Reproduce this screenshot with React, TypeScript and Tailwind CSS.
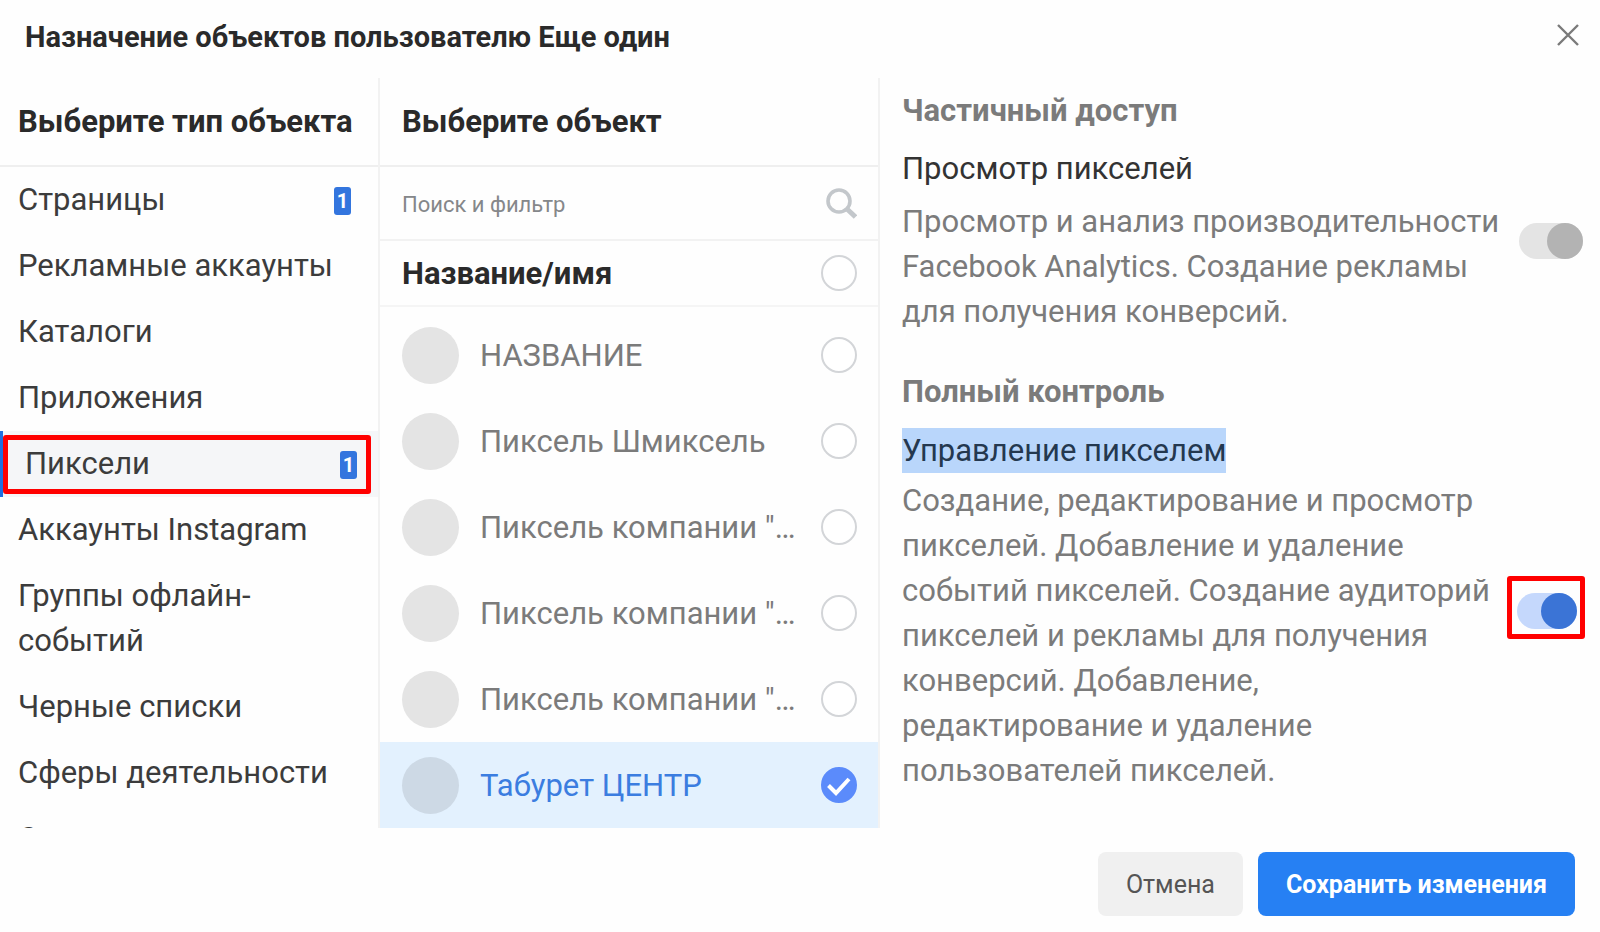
import React, { useState } from "react";

type ObjectType = { name: string; count?: number };

const objectTypes: ObjectType[] = [
  { name: "Страницы", count: 1 },
  { name: "Рекламные аккаунты" },
  { name: "Каталоги" },
  { name: "Приложения" },
  { name: "Пиксели", count: 1 },
  { name: "Аккаунты Instagram" },
  { name: "Группы офлайн-событий" },
  { name: "Черные списки" },
  { name: "Сферы деятельности" },
  { name: "Счета" },
];

const objects = [
  "НАЗВАНИЕ",
  "Пиксель Шмиксель",
  'Пиксель компании "Табурет"',
  'Пиксель компании "Табурет 2"',
  'Пиксель компании "Табурет 3"',
  "Табурет ЦЕНТР",
];

function RoundCheck({
  label,
  checked,
  onChange,
}: {
  label: string;
  checked: boolean;
  onChange: () => void;
}) {
  return (
    <span className="relative flex size-9 shrink-0">
      <input
        type="checkbox"
        aria-label={label}
        checked={checked}
        onChange={onChange}
        className="size-9 appearance-none rounded-full border-2 border-[#d3d5d8] bg-white checked:border-[#5b8bfb] checked:bg-[#5b8bfb]"
      />
      {checked && (
        <svg viewBox="0 0 36 36" className="pointer-events-none absolute inset-0 size-9">
          <path d="M7.5 18.5 L15 26 L28 12" fill="none" stroke="#fff" strokeWidth="4" />
        </svg>
      )}
    </span>
  );
}

function Switch({
  label,
  on,
  muted,
  onChange,
}: {
  label: string;
  on: boolean;
  muted?: boolean;
  onChange?: () => void;
}) {
  return (
    <label className="flex shrink-0">
      <input
        type="checkbox"
        role="switch"
        aria-label={label}
        checked={on}
        disabled={muted}
        onChange={onChange}
        className="peer sr-only"
      />
      <span
        className={
          muted
            ? "flex h-9 w-16 justify-end rounded-full bg-[#e4e4e4]"
            : on
              ? "flex h-9 w-[60px] justify-end rounded-full bg-[#c5d8fc]"
              : "flex h-9 w-[60px] justify-start rounded-full bg-[#e4e4e4]"
        }
      >
        <span className={muted ? "size-9 rounded-full bg-[#b3b3b3]" : "size-9 rounded-full bg-[#3b74d6]"} />
      </span>
    </label>
  );
}

export default function App() {
  const [type, setType] = useState("Пиксели");
  const [picked, setPicked] = useState<string[]>(["Табурет ЦЕНТР"]);
  const [control, setControl] = useState(true);

  const toggle = (name: string) =>
    setPicked((list) => (list.includes(name) ? list.filter((n) => n !== name) : [...list, name]));

  return (
    <div className="flex min-h-screen flex-col bg-[#fefefe] font-[Roboto,sans-serif] text-[31px] leading-[45px] text-[#3c3c3c]">
      <header className="flex h-[78px] items-center justify-between pr-5 pb-2 pl-[25px]">
        <h1 className="pt-1 text-[29px] font-bold text-[#2a2a2a]">
          Назначение объектов пользователю Еще один
        </h1>
        <button type="button" aria-label="Закрыть" className="flex">
          <svg viewBox="0 0 24 24" className="size-6">
            <path d="M2 2 L22 22 M22 2 L2 22" stroke="#7a7a7a" strokeWidth="2.4" />
          </svg>
        </button>
      </header>

      <main className="grid h-[750px] grid-cols-[minmax(0,19fr)_minmax(0,25fr)_minmax(0,36fr)]">
        <nav className="flex flex-col overflow-hidden border-r-2 border-[#f2f2f2]">
          <h2 className="flex h-[89px] shrink-0 items-center border-b-2 border-[#efefef] pl-[18px] font-bold whitespace-nowrap text-[#2a2a2a]">
            Выберите тип объекта
          </h2>
          {objectTypes.map((item) => {
            const active = item.name === type;
            return (
              <button
                key={item.name}
                type="button"
                onClick={() => setType(item.name)}
                className={
                  active
                    ? "relative flex min-h-[66px] shrink-0 items-center justify-between border-l-[3px] border-[#1f6fe0] bg-[#f5f6f8] pt-[10px] pr-[21px] pb-[11px] pl-[22px] text-left"
                    : "flex min-h-[66px] shrink-0 items-center justify-between pt-[10px] pr-[27px] pb-[11px] pl-[18px] text-left"
                }
              >
                <span>{item.name}</span>
                {item.count && (
                  <span className="mt-[2px] flex h-7 w-[17px] items-center justify-center rounded-[3px] bg-[#3375de] text-[20px] leading-7 font-bold text-white">
                    {item.count}
                  </span>
                )}
                {active && (
                  <span className="pointer-events-none absolute top-1 right-[7px] bottom-[3px] left-0 rounded-[3px] border-5 border-[#ff0000]" />
                )}
              </button>
            );
          })}
        </nav>

        <section className="flex flex-col border-r-2 border-[#f2f2f2]">
          <h2 className="flex h-[89px] shrink-0 items-center border-b-2 border-[#efefef] pl-[22px] font-bold text-[#2a2a2a]">
            Выберите объект
          </h2>
          <div className="flex h-[74px] shrink-0 items-center border-b-2 border-[#f2f2f2] pr-[21px] pl-[22px]">
            <input
              type="search"
              aria-label="Поиск и фильтр"
              placeholder="Поиск и фильтр"
              className="min-w-0 flex-1 bg-transparent pt-[2px] text-[22px] outline-none placeholder:text-[#85878a]"
            />
            <svg viewBox="0 0 32 32" className="size-8">
              <circle cx="14" cy="14" r="11" fill="none" stroke="#c3c7cb" strokeWidth="3.6" />
              <path d="M22 22 L30.5 30" stroke="#c3c7cb" strokeWidth="5" />
            </svg>
          </div>
          <div className="flex h-[66px] shrink-0 items-center justify-between border-b-2 border-[#f5f5f5] pr-[21px] pl-[22px]">
            <h3 className="font-bold text-[#2a2a2a]">Название/имя</h3>
            <RoundCheck
              label="Выбрать все"
              checked={picked.length === objects.length}
              onChange={() => setPicked(picked.length === objects.length ? [] : objects)}
            />
          </div>
          <ul className="flex flex-1 flex-col pt-[5px]">
            {objects.map((name) => {
              const selected = picked.includes(name);
              return (
                <li
                  key={name}
                  className={
                    selected
                      ? "flex h-[86px] items-center bg-[#e3f1fe] pr-[21px] pl-[22px] text-[#3b7de0]"
                      : "flex h-[86px] items-center pr-[21px] pl-[22px] text-[#7b7b7b]"
                  }
                >
                  <span
                    className={
                      selected
                        ? "size-[57px] shrink-0 rounded-full bg-[#cdd9e5]"
                        : "size-[57px] shrink-0 rounded-full bg-[#e4e4e4]"
                    }
                  />
                  <span className="mr-5 ml-[21px] min-w-0 flex-1 truncate">{name}</span>
                  <RoundCheck label={name} checked={selected} onChange={() => toggle(name)} />
                </li>
              );
            })}
          </ul>
        </section>

        <section className="flex flex-col pt-[10px] pl-[22px] text-[#7b7b7b]">
          <h2 className="font-bold">Частичный доступ</h2>
          <h3 className="mt-[13px] text-[#333333]">Просмотр пикселей</h3>
          <div className="mt-2 flex items-start justify-between pr-[17px]">
            <p className="max-w-[608px]">
              Просмотр и анализ производительности Facebook Analytics. Создание рекламы для получения
              конверсий.
            </p>
            <div className="pt-6">
              <Switch label="Просмотр пикселей" on={false} muted />
            </div>
          </div>

          <h2 className="mt-[35px] font-bold">Полный контроль</h2>
          <h3 className="mt-[14px] text-[#24384f]">
            <mark className="inline-block bg-[#b9d6fb] text-inherit">Управление пикселем</mark>
          </h3>
          <div className="mt-[5px] flex items-center justify-between pr-[15px]">
            <p className="max-w-[600px]">
              Создание, редактирование и просмотр пикселей. Добавление и удаление событий пикселей.
              Создание аудиторий пикселей и рекламы для получения конверсий. Добавление, редактирование
              и удаление пользователей пикселей.
            </p>
            <div className="mb-14 rounded-[3px] border-5 border-[#ff0000] pt-3 pr-[3px] pb-[5px] pl-[5px]">
              <Switch
                label="Управление пикселем"
                on={control}
                onChange={() => setControl(!control)}
              />
            </div>
          </div>
        </section>
      </main>

      <footer className="flex items-center justify-end gap-[15px] pt-6 pr-[25px] pb-4 text-[25px]">
        <button type="button" className="h-16 rounded-[8px] bg-[#f0f0f0] px-7 text-[#555555]">
          Отмена
        </button>
        <button type="button" className="h-16 rounded-[8px] bg-[#2680f3] px-7 font-bold text-white">
          Сохранить изменения
        </button>
      </footer>
    </div>
  );
}
